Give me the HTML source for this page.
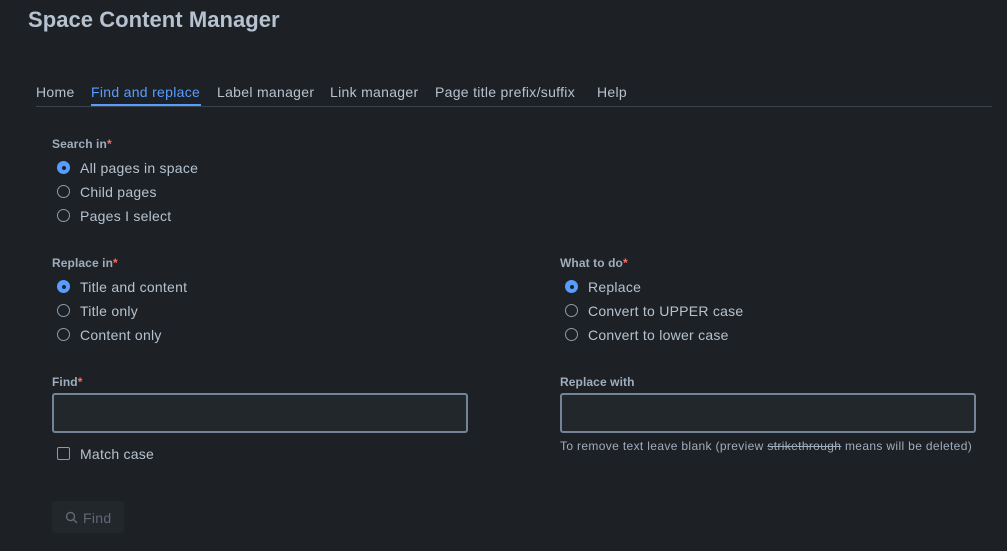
<!DOCTYPE html>
<html><head><style>
body{margin:0;width:1007px;height:551px;background:#1d2125;font-family:"Liberation Sans",sans-serif;color:#b6c2cf;position:relative;overflow:hidden}
.a{position:absolute;white-space:nowrap}
h1{position:absolute;left:28px;top:7px;margin:0;font-size:22px;font-weight:bold;color:#b6c2cf;letter-spacing:0.05px}
.tab{position:absolute;top:84px;font-size:14px;color:#b6c2cf;letter-spacing:0.3px}
.lbl{position:absolute;font-size:12px;font-weight:bold;color:#9fadbc;letter-spacing:0.1px}
.lbl i{color:#f87168;font-style:normal}
.r{position:absolute;font-size:14px;color:#b6c2cf;padding-left:28px;line-height:16px;letter-spacing:0.25px}
.r:before{content:"";position:absolute;left:5px;top:1px;width:11px;height:11px;border:1.5px solid #8c9bab;border-radius:50%}
.r.on:before{background:#579dff;border-color:#579dff;width:11px;height:11px}
.r.on:after{content:"";position:absolute;left:10px;top:6px;width:4px;height:4px;border-radius:50%;background:#1d2125}
.inp{position:absolute;height:36px;border:2px solid #738496;border-radius:3px;background:#22272b;box-sizing:border-box}
</style></head><body>
<h1>Space Content Manager</h1>
<div class="tab" style="left:36px">Home</div>
<div class="tab" style="left:91px;color:#579dff">Find and replace</div>
<div class="a" style="left:91px;top:104px;width:110px;height:2px;background:#579dff"></div>
<div class="tab" style="left:217px">Label manager</div>
<div class="tab" style="left:330px">Link manager</div>
<div class="tab" style="left:435px">Page title prefix/suffix</div>
<div class="tab" style="left:597px">Help</div>
<div class="a" style="left:36px;top:106px;width:956px;height:1px;background:#3b4249"></div>

<div class="lbl" style="left:52px;top:137px">Search in<i>*</i></div>
<div class="r on" style="left:52px;top:160px">All pages in space</div>
<div class="r" style="left:52px;top:184px">Child pages</div>
<div class="r" style="left:52px;top:208px">Pages I select</div>

<div class="lbl" style="left:52px;top:256px">Replace in<i>*</i></div>
<div class="r on" style="left:52px;top:279px">Title and content</div>
<div class="r" style="left:52px;top:303px">Title only</div>
<div class="r" style="left:52px;top:327px">Content only</div>

<div class="lbl" style="left:560px;top:256px">What to do<i>*</i></div>
<div class="r on" style="left:560px;top:279px">Replace</div>
<div class="r" style="left:560px;top:303px">Convert to UPPER case</div>
<div class="r" style="left:560px;top:327px">Convert to lower case</div>

<div class="lbl" style="left:52px;top:375px">Find<i>*</i></div>
<div class="inp" style="left:52px;top:393px;width:416px;height:40px"></div>
<div class="lbl" style="left:560px;top:375px">Replace with</div>
<div class="inp" style="left:560px;top:393px;width:416px;height:40px"></div>
<div class="a" style="left:560px;top:439px;font-size:12px;color:#9fadbc;letter-spacing:0.35px">To remove text leave blank (preview <s>strikethrough</s> means will be deleted)</div>

<div class="a" style="left:57px;top:447px;width:11px;height:11px;border:1.5px solid #8c9bab;border-radius:2px"></div>
<div class="a" style="left:80px;top:446px;font-size:14px;letter-spacing:0.25px">Match case</div>

<div class="a" style="left:52px;top:501px;width:72px;height:32px;background:#22272b;border-radius:3px"></div>
<svg class="a" style="left:65px;top:511px" width="13" height="13" viewBox="0 0 13 13"><circle cx="5.5" cy="5.5" r="4" fill="none" stroke="#5d6a77" stroke-width="1.4"/><path d="M8.5 8.5L12 12" stroke="#5d6a77" stroke-width="1.4"/></svg>
<div class="a" style="left:83px;top:510px;font-size:14px;color:#5d6a77;letter-spacing:0.3px">Find</div>
</body></html>
